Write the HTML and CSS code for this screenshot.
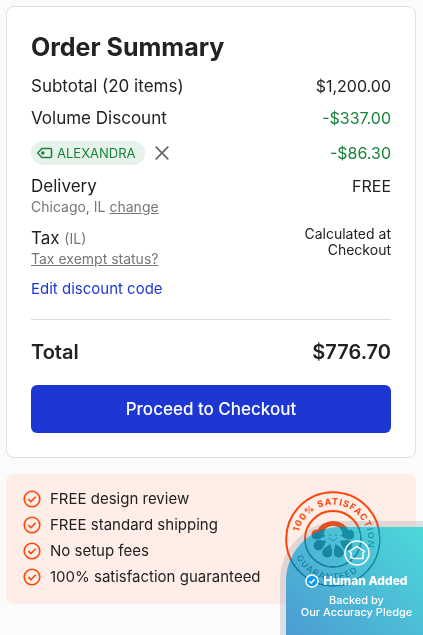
FILE: index.html
```html
<!DOCTYPE html>
<html lang="en">
	<head>
		<meta charset="UTF-8" />
		<title>Order Summary</title>
		<meta name="viewport" content="width=device-width,initial-scale=1" />
		<link rel="stylesheet" href="styles.css">
	</head>
	<body>
		<main>
			<section class="summary">
				<h1>Order Summary</h1>
				<div class="row"><span>Subtotal (20 items)</span><span class="amount">$1,200.00</span></div>
				<div class="row"><span>Volume Discount</span><span class="amount saving">-$337.00</span></div>
				<div class="row coupon-row">
					<div class="coupon">
						<span class="tag">
							<svg viewBox="0 0 16 12" width="16" height="12"><path d="M5 1.5h8.5a1 1 0 0 1 1 1v7a1 1 0 0 1-1 1H5L1.3 6.8a1.2 1.2 0 0 1 0-1.6z" fill="none" stroke="currentColor" stroke-width="1.5" stroke-linejoin="round"/><circle cx="5.8" cy="6" r="1.8" fill="currentColor"/></svg>
							ALEXANDRA
						</span>
						<button class="remove" type="button" aria-label="Remove ALEXANDRA">
							<svg viewBox="0 0 14 14" width="14" height="14"><path d="M.7.7l12.6 12.6M13.3.7L.7 13.3" stroke="currentColor" stroke-width="1.7"/></svg>
						</button>
					</div>
					<span class="amount saving">-$86.30</span>
				</div>
				<div class="row delivery">
					<div>Delivery<div class="note">Chicago, IL <a href="#">change</a></div></div>
					<span class="amount">FREE</span>
				</div>
				<div class="row tax">
					<div>Tax <span class="note">(IL)</span><div class="note"><a href="#">Tax exempt status?</a></div></div>
					<span class="later">Calculated at Checkout</span>
				</div>
				<a class="edit" href="#">Edit discount code</a>
				<div class="row total"><span>Total</span><span>$776.70</span></div>
				<button class="checkout" type="button">Proceed to Checkout</button>
			</section>
			<section class="perks">
				<ul>
					<li><svg class="check" viewBox="0 0 18 18"><circle cx="9" cy="9" r="7.8"/><path d="M5.3 9.2l2.6 2.5 4.8-5"/></svg>FREE design review</li>
					<li><svg class="check" viewBox="0 0 18 18"><circle cx="9" cy="9" r="7.8"/><path d="M5.3 9.2l2.6 2.5 4.8-5"/></svg>FREE standard shipping</li>
					<li><svg class="check" viewBox="0 0 18 18"><circle cx="9" cy="9" r="7.8"/><path d="M5.3 9.2l2.6 2.5 4.8-5"/></svg>No setup fees</li>
					<li><svg class="check" viewBox="0 0 18 18"><circle cx="9" cy="9" r="7.8"/><path d="M5.3 9.2l2.6 2.5 4.8-5"/></svg>100% satisfaction guaranteed</li>
				</ul>
				<svg class="seal" viewBox="0 0 96 96">
					<defs>
						<path id="arc-top" d="M13.4 54a35 35 0 1 1 69.2 0a35 35 0 0 1-8 18"/>
						<path id="arc-bottom" d="M7 48a41 41 0 0 0 82 0"/>
						<path id="petal" d="M0 7C-2 11-6 14-5 18C-4 23 4 23 5 18C6 14 2 11 0 7z"/>
					</defs>
					<circle class="ring" cx="48" cy="48" r="46.8"/>
					<circle class="ring" cx="48" cy="48" r="28"/>
					<text><textPath href="#arc-top" startOffset="13">100% SATISFACTION</textPath></text>
					<text text-anchor="middle"><textPath href="#arc-bottom" startOffset="43%">GUARANTEED</textPath></text>
					<path d="M32 40a17 15 0 0 1 32 0l-7 3c0-11-18-11-18 0z"/>
					<g transform="translate(48 46)">
						<use href="#petal" transform="rotate(20)"/>
						<use href="#petal" transform="rotate(-20)"/>
						<use href="#petal" transform="rotate(60)"/>
						<use href="#petal" transform="rotate(-60)"/>
						<use href="#petal" transform="rotate(98)"/>
						<use href="#petal" transform="rotate(-98)"/>
						<circle cx="-3" cy="-2" r="1"/>
						<circle cx="3" cy="-2" r="1"/>
						<path class="smile" d="M-4 1q4 5 8 0"/>
					</g>
				</svg>
			</section>
		</main>
		<aside class="pledge">
			<svg class="house" viewBox="0 0 26 26"><circle cx="13" cy="13" r="12"/><path d="M13 6.5l7.5 5-1.5 1.2v5.8h-9.5l-2.5-1v-4.8L5.5 11.5z"/></svg>
			<div class="added">
				<svg class="verified" viewBox="0 0 14 14"><circle cx="7" cy="7" r="6"/><path d="M4.4 7.2l1.8 1.8 3.4-3.7"/></svg>
				Human Added
			</div>
			<div class="backed">Backed by<br />Our Accuracy Pledge</div>
		</aside>
	</body>
</html>
```
FILE: styles.css
```css
*{
	box-sizing:border-box;
}
body{
	margin:0;
	padding:6px 7px 0 6px;
	background-color:#fbfbfb;
	color:#222;
	font:17px/24px Inter,"Liberation Sans",sans-serif;
}
button{
	border:0;
	font:inherit;
	cursor:pointer;
}
svg{
	flex:none;
}
.summary{
	padding:24px;
	border:1px solid #e0e0e0;
	border-radius:8px;
	background-color:#fff;
}
.summary h1{
	margin:0 0 11px;
	font-size:25px;
	line-height:32px;
}
.row{
	display:flex;
	justify-content:space-between;
	margin-bottom:8px;
}
.amount{
	font-size:16px;
}
.saving{
	color:#16833a;
}
.coupon-row{
	align-items:center;
	height:30px;
	margin-bottom:6px;
}
.coupon,.tag{
	display:flex;
	align-items:center;
}
.coupon{
	gap:10px;
}
.tag{
	gap:4px;
	padding:0 10px 0 6px;
	border-radius:12px;
	background-color:#e7f2ea;
	color:#16833a;
	font-size:13px;
}
.remove{
	display:flex;
	padding:0;
	background:none;
	color:#666;
}
.delivery{
	margin-bottom:10px;
}
.note{
	color:#767676;
	font-size:14px;
	line-height:18px;
}
.note a{
	color:inherit;
}
.later{
	width:92px;
	font-size:14px;
	line-height:16px;
	text-align:right;
}
.edit{
	color:#1d38d2;
	font-size:15px;
	text-decoration:none;
}
.total{
	margin:18px 0 21px;
	padding-top:20px;
	border-top:1px solid #ddd;
	font-size:20px;
	font-weight:600;
}
.checkout{
	width:100%;
	height:48px;
	border-radius:6px;
	background-color:#1d38d2;
	color:#fff;
	font-weight:500;
}
.perks{
	display:flex;
	justify-content:space-between;
	margin-top:16px;
	padding:12px 35px 14px 17px;
	border-radius:8px;
	background-color:#ffede8;
}
.perks ul{
	margin:0;
	padding:0;
	list-style:none;
	font-size:15px;
	line-height:26px;
}
.perks li{
	display:flex;
	align-items:center;
	gap:9px;
	white-space:nowrap;
}
.check{
	width:18px;
	height:18px;
	fill:none;
	stroke:#ff4407;
	stroke-width:1.6;
}
.seal{
	width:96px;
	height:96px;
	margin-top:5px;
	fill:#ff4407;
	font-size:9px;
	font-weight:700;
	letter-spacing:1px;
}
.ring,.smile{
	fill:none;
	stroke:#ff4407;
	stroke-width:2;
}
.smile{
	stroke-width:1;
}
.pledge{
	position:fixed;
	right:0;
	bottom:0;
	display:flex;
	flex-direction:column;
	align-items:center;
	width:143px;
	height:114px;
	padding:13px 2px 0 6px;
	border:solid rgba(110,130,145,.22);
	border-width:6px 0 0 6px;
	border-radius:60px 0 0 0;
	color:#fff;
	text-align:center;
}
.pledge::before{
	content:"";
	position:absolute;
	inset:0;
	z-index:-1;
	border-radius:54px 0 0 0;
	background:linear-gradient(45deg,rgba(0,132,225,.6),rgba(0,235,235,.6));
	backdrop-filter:grayscale(1) contrast(2) brightness(.75);
}
.house{
	width:26px;
	height:26px;
	fill:none;
	stroke:#fff;
	stroke-width:1.5;
}
.added{
	display:flex;
	align-items:center;
	gap:4px;
	margin-top:5px;
	font-size:12px;
	font-weight:800;
	line-height:20px;
}
.verified{
	width:14px;
	height:14px;
	fill:#0b9bf5;
	stroke:#fff;
	stroke-width:1.5;
}
.backed{
	margin-top:3px;
	font-size:11px;
	font-weight:500;
	line-height:12px;
	white-space:nowrap;
}
```
